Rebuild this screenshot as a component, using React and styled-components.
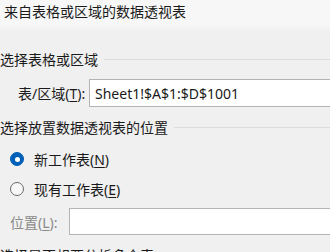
import React, { useState } from "react";
import styled, { createGlobalStyle } from "styled-components";

const GlobalStyle = createGlobalStyle`
  html, body {
    margin: 0;
    padding: 0;
    background: #f0f0f0;
  }
  body {
    width: 330px;
    height: 252px;
    overflow: hidden;
    font-family: "Noto Sans", "Noto Sans CJK SC", sans-serif;
    font-size: 14px;
    color: #1a1a1a;
  }
`;

const Dialog = styled.div`
  width: 330px;
  height: 252px;
  overflow: hidden;
  display: flex;
  flex-direction: column;
  background: #f0f0f0;
`;

const TitleBar = styled.div`
  height: 31px;
  flex-shrink: 0;
  padding: 2px 4px 0;
  box-sizing: border-box;
  line-height: 20px;
  background: linear-gradient(#f7f7f7 80%, #f0f0f0);
  white-space: nowrap;
`;

const GroupHeader = styled.div`
  display: flex;
  align-items: center;
  flex-shrink: 0;
  margin-top: ${(p) => p.$top}px;
  line-height: 20px;
  white-space: nowrap;
  &::after {
    content: "";
    flex: 1;
    height: 1px;
    background: #dcdcdc;
    margin-left: 6px;
    margin-top: -1px;
  }
`;

const FieldRow = styled.div`
  display: grid;
  flex-shrink: 0;
  grid-template-columns: ${(p) => p.$label}px 1fr;
  align-items: center;
  margin-top: ${(p) => p.$top}px;
  padding-left: ${(p) => p.$indent}px;
`;

const Label = styled.span`
  color: ${(p) => (p.$disabled ? "#8a8a8a" : "#1a1a1a")};
  white-space: nowrap;
  u {
    text-underline-offset: 2px;
  }
`;

const TextBox = styled.div`
  height: ${(p) => p.$height}px;
  box-sizing: border-box;
  border: 1px solid #b4b4b4;
  border-right: none;
  background: #fff;
  padding-left: 5px;
  display: flex;
  align-items: center;
  font-family: "Noto Sans", sans-serif;
  white-space: nowrap;
`;

const Options = styled.div`
  display: flex;
  flex-direction: column;
  flex-shrink: 0;
  gap: 8px;
  margin-top: 10px;
  padding-left: 10px;
`;

const Option = styled.label`
  display: flex;
  align-items: center;
  height: 22px;
  gap: 10px;
  cursor: default;
`;

const Dot = styled.span`
  width: 14px;
  height: 14px;
  box-sizing: border-box;
  border-radius: 50%;
  border: 1px solid ${(p) => (p.$on ? "#005fb8" : "#6a6a6a")};
  background: ${(p) => (p.$on ? "#005fb8" : "#f7f7f7")};
  display: flex;
  align-items: center;
  justify-content: center;
  &::after {
    content: "";
    width: 5px;
    height: 5px;
    border-radius: 50%;
    background: #fff;
    display: ${(p) => (p.$on ? "block" : "none")};
  }
`;

const Footer = styled.div`
  flex-shrink: 0;
  margin-top: 11px;
  line-height: 20px;
  white-space: nowrap;
`;

export default function App() {
  const [target, setTarget] = useState("new");
  return (
    <>
      <GlobalStyle />
      <Dialog>
        <TitleBar>来自表格或区域的数据透视表</TitleBar>

        <GroupHeader $top={19}>选择表格或区域</GroupHeader>
        <FieldRow $label={71} $top={9} $indent={18}>
          <Label>
            表/区域(<u>T</u>):
          </Label>
          <TextBox $height={28}>Sheet1!$A$1:$D$1001</TextBox>
        </FieldRow>

        <GroupHeader $top={11}>选择放置数据透视表的位置</GroupHeader>
        <Options>
          <Option onClick={() => setTarget("new")}>
            <Dot $on={target === "new"} />
            <Label>
              新工作表(<u>N</u>)
            </Label>
          </Option>
          <Option onClick={() => setTarget("existing")}>
            <Dot $on={target === "existing"} />
            <Label>
              现有工作表(<u>E</u>)
            </Label>
          </Option>
        </Options>
        <FieldRow $label={59} $top={8} $indent={10}>
          <Label $disabled>
            位置(<u>L</u>):
          </Label>
          <TextBox $height={27} />
        </FieldRow>

        <Footer>选择是否想要分析多个表</Footer>
      </Dialog>
    </>
  );
}
